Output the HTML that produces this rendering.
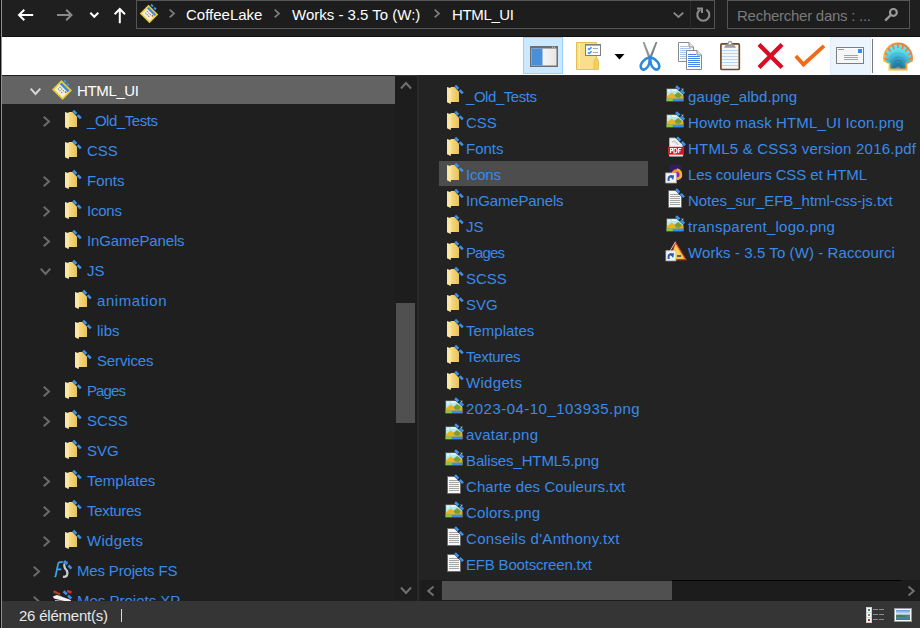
<!DOCTYPE html>
<html><head><meta charset="utf-8"><style>
html,body{margin:0;padding:0;}
body{width:920px;height:628px;position:relative;overflow:hidden;background:#1f1f1f;font-family:"Liberation Sans", sans-serif;}
.t{position:absolute;font-size:15px;line-height:20px;white-space:nowrap;}
svg{display:block}
</style></head><body>
<div style="position:absolute;left:0;top:0;width:920px;height:37px;background:#1f1f1f"></div><div style="position:absolute;left:0;top:36px;width:920px;height:1px;background:#121212"></div><svg style="position:absolute;left:17px;top:8px" width="18" height="14" viewBox="0 0 18 14"><path d="M2 7 H16.2 M7.3 1.7 L2 7 L7.3 12.3" stroke="#fff" stroke-width="2" fill="none"/></svg><svg style="position:absolute;left:56px;top:8px" width="18" height="14" viewBox="0 0 18 14"><path d="M1 7 H15.5 M10.2 1.7 L15.5 7 L10.2 12.3" stroke="#8a8a8a" stroke-width="2" fill="none"/></svg><svg style="position:absolute;left:89px;top:11px" width="12" height="8" viewBox="0 0 12 8"><path d="M1.3 1.8 L5.3 5.8 L9.3 1.8" stroke="#fff" stroke-width="2" fill="none"/></svg><svg style="position:absolute;left:113px;top:7px" width="14" height="17" viewBox="0 0 14 17"><path d="M6.8 16.2 V2 M1.6 7.2 L6.8 2 L12 7.2" stroke="#fff" stroke-width="2" fill="none"/></svg><div style="position:absolute;left:136px;top:0px;width:577px;height:27px;border:1px solid #555;background:#1d1d1d"></div><div style="position:absolute;left:690px;top:1px;width:1px;height:28px;background:#2c2c2c"></div><svg style="position:absolute;left:137px;top:2px" width="24" height="24" viewBox="0 0 24 24"><g transform="translate(12 12) rotate(45) scale(0.88)"><rect x="-7" y="-6.2" width="14" height="12.4" fill="#f3eed8" stroke="#e6cc2a" stroke-width="1.7"/><rect x="-6" y="-5.3" width="12" height="2.6" fill="#3f86de"/><path d="M-4 -0.5 h1.2 M-1.5 -0.5 h1.2 M1 -0.5 h1.2 M-4 2 h1.2 M-1.5 2 h1.2 M1 2 h1.2" stroke="#707070" stroke-width="1.1"/><circle cx="4.3" cy="-1.2" r="0.9" fill="#d8362a"/></g><path d="M14 2.5 L16 4.5 M17 5.5 L19 7.5" stroke="#3d92ea" stroke-width="1.8"/></svg><svg style="position:absolute;left:168px;top:8px" width="8" height="11" viewBox="0 0 8 11"><path d="M1.7 1.7 L6 5.5 L1.7 9.3" stroke="#7a7a7a" stroke-width="1.8" fill="none"/></svg><div class="t" style="left:186px;top:5px;color:#ffffff;">CoffeeLake</div><svg style="position:absolute;left:273px;top:8px" width="8" height="11" viewBox="0 0 8 11"><path d="M1.7 1.7 L6 5.5 L1.7 9.3" stroke="#7a7a7a" stroke-width="1.8" fill="none"/></svg><div class="t" style="left:292px;top:5px;color:#ffffff;">Works - 3.5 To (W:)</div><svg style="position:absolute;left:433px;top:8px" width="8" height="11" viewBox="0 0 8 11"><path d="M1.7 1.7 L6 5.5 L1.7 9.3" stroke="#7a7a7a" stroke-width="1.8" fill="none"/></svg><div class="t" style="left:452px;top:5px;color:#ffffff;letter-spacing:-0.362px;">HTML_UI</div><svg style="position:absolute;left:672px;top:11px" width="13" height="8" viewBox="0 0 13 8"><path d="M1.7 1.7 L6.5 6 L11.3 1.7" stroke="#8a8a8a" stroke-width="1.8" fill="none"/></svg><svg style="position:absolute;left:694px;top:6px" width="18" height="18" viewBox="0 0 18 18"><path d="M6.3 3.6 A6 6 0 1 0 12.3 3.6" stroke="#8a8a8a" stroke-width="2.1" fill="none"/><path d="M3 2.4 H8 V7" stroke="#8a8a8a" stroke-width="2" fill="none"/></svg><div style="position:absolute;left:727px;top:0px;width:181px;height:27px;border:1px solid #555;background:#1d1d1d"></div><div class="t" style="left:737px;top:6px;color:#7a7a7a;letter-spacing:-0.264px;">Rechercher dans : ...</div><svg style="position:absolute;left:882px;top:6px" width="18" height="18" viewBox="0 0 18 18"><circle cx="11.4" cy="6.4" r="3.4" stroke="#9a9a9a" stroke-width="2.2" fill="none"/><path d="M9 8.8 L3.2 14.6" stroke="#9a9a9a" stroke-width="2.3"/></svg><div style="position:absolute;left:2px;top:37px;width:918px;height:38px;background:#ffffff"></div><div style="position:absolute;left:2px;top:75px;width:918px;height:1px;background:#333"></div><div style="position:absolute;left:523px;top:37px;width:38px;height:35px;background:#cce8ff;border:1px solid #99d1ff"></div><svg style="position:absolute;left:530px;top:46px" width="28" height="21" viewBox="0 0 28 21"><defs><linearGradient id="lg" x1="0" x2="1"><stop offset="0" stop-color="#ffffff"/><stop offset="1" stop-color="#e6e6e6"/></linearGradient></defs><rect x="0.75" y="0.75" width="26.5" height="19.5" fill="url(#lg)" stroke="#6e6e6e" stroke-width="1.5"/><rect x="0" y="0" width="28" height="2.5" fill="#6e6e6e"/><rect x="1.5" y="2.5" width="11" height="17" fill="#4a8fd9"/><rect x="22" y="0.7" width="1" height="1" fill="#ddd"/><rect x="24" y="0.7" width="1" height="1" fill="#ddd"/></svg><svg style="position:absolute;left:576px;top:41px" width="26" height="30" viewBox="0 0 26 30"><path d="M0.5 1.5 H20.5 V28.5 H0.5 Z" fill="#f8df8c" stroke="#e4bf52" stroke-width="1"/><path d="M3.5 2 V28" stroke="#fff1c0" stroke-width="1"/><path d="M18 28.5 V19.5 L20.5 16.5 L22.5 19.5 V28.5 Z" fill="#f2cd62" stroke="#e4bf52" stroke-width="0.9"/><rect x="9.5" y="3.5" width="15" height="11" fill="#fafafa" stroke="#7a7f88" stroke-width="1"/><rect x="9" y="3" width="16" height="1.6" fill="#7a7f88"/><path d="M12 7.4 L13.2 8.6 L15.6 6.2 M12 11.4 L13.2 12.6 L15.6 10.2" stroke="#3a8ee8" stroke-width="1.4" fill="none"/><path d="M17 7.5 H22 M17 11.5 H22" stroke="#a8a8a8" stroke-width="1"/></svg><svg style="position:absolute;left:614px;top:54px" width="11" height="6" viewBox="0 0 11 6"><path d="M0.5 0 H10.5 L5.5 5.5 Z" fill="#000"/></svg><svg style="position:absolute;left:636px;top:38px" width="28" height="34" viewBox="0 0 28 34"><path d="M6.6 4 L8.4 4 L14.6 19 L12 19 Z" fill="#8e9399"/><path d="M19.6 4 L21.4 4 L16 19 L13.4 19 Z" fill="#7d8288"/><path d="M13.6 19.2 C8 20.5 3.2 26.5 5.2 30.3 C7.2 33.3 12.2 30.5 13.2 25.5 C13.7 23 13.7 21 13.6 19.2 Z" stroke="#2e8ad8" stroke-width="2.5" fill="none"/><path d="M14.4 19.2 C20 20.5 24.8 26.5 22.8 30.3 C20.8 33.3 15.8 30.5 14.8 25.5 C14.3 23 14.3 21 14.4 19.2 Z" stroke="#2e8ad8" stroke-width="2.5" fill="none"/></svg><svg style="position:absolute;left:678px;top:42px" width="25" height="29" viewBox="0 0 25 29"><path d="M0.5 0.5 H11 L15.5 5 V19.5 H0.5 Z" fill="#fcfcfc" stroke="#8a8a8a" stroke-width="1"/><path d="M11 0.5 V5 H15.5" fill="#e8e8e8" stroke="#8a8a8a" stroke-width="1"/><path d="M2 4.5 H10 M2 6.5 H13 M2 8.5 H13 M2 10.5 H13 M2 12.5 H13 M2 14.5 H13 M2 16.5 H13" stroke="#a8c6f4" stroke-width="1"/><path d="M8.5 8.5 H19 L23.5 13 V27.5 H8.5 Z" fill="#fcfcfc" stroke="#8a8a8a" stroke-width="1"/><path d="M19 8.5 V13 H23.5" fill="#e8e8e8" stroke="#8a8a8a" stroke-width="1"/><path d="M10 12.5 H18 M10 14.5 H22 M10 16.5 H22 M10 18.5 H22 M10 20.5 H22 M10 22.5 H22 M10 24.5 H22" stroke="#4a86e8" stroke-width="1"/></svg><svg style="position:absolute;left:719px;top:40px" width="23" height="31" viewBox="0 0 23 31"><rect x="1.9" y="3.9" width="18.4" height="25.6" rx="1" fill="#f6f6f6" stroke="#6e4a2a" stroke-width="1.7"/><path d="M3 10.5 H19 M3 13.5 H19 M3 16.5 H19 M3 19.5 H19 M3 22.5 H19 M3 25.5 H19" stroke="#b4d6ee" stroke-width="1"/><path d="M5 7.8 L7 4.5 H15 L17 7.8 Z" fill="#9c9c9c"/><circle cx="11" cy="3.3" r="1.8" fill="#fff" stroke="#a0a0a0" stroke-width="1.3"/></svg><svg style="position:absolute;left:757px;top:43px" width="27" height="26" viewBox="0 0 27 26"><path d="M2 1.5 L25 24.5 M25 1.5 L2 24.5" stroke="#d80c24" stroke-width="4.3"/></svg><svg style="position:absolute;left:794px;top:44px" width="32" height="24" viewBox="0 0 32 24"><path d="M1.8 12 L9.5 20.5 L30 1.8" stroke="#f06a1a" stroke-width="3.8" fill="none"/></svg><div style="position:absolute;left:830px;top:37px;width:39px;height:36px;background:#ecf4fd;border:1px solid #e3eefb"></div><svg style="position:absolute;left:836px;top:47px" width="28" height="17" viewBox="0 0 28 17"><rect x="0.5" y="0.5" width="27" height="16" fill="#f5f6f8" stroke="#7e7e7e" stroke-width="1"/><rect x="1" y="1" width="26" height="1" fill="#fff"/><rect x="2" y="2" width="6" height="1" fill="#9a9a9a"/><rect x="22" y="2" width="4" height="4" fill="#3d8be8"/><rect x="8" y="8" width="14" height="1" fill="#a4a4a4"/><rect x="8" y="10" width="14" height="1" fill="#a4a4a4"/><rect x="8" y="12" width="14" height="1" fill="#a4a4a4"/></svg><div style="position:absolute;left:872px;top:39px;width:1px;height:34px;background:#7a7a7a"></div><svg style="position:absolute;left:882px;top:42px" width="32" height="29" viewBox="0 0 32 29"><defs><radialGradient id="sh" cx="16" cy="27" r="24" gradientUnits="userSpaceOnUse"><stop offset="0" stop-color="#5ab4e6"/><stop offset="0.15" stop-color="#2a6f9a"/><stop offset="0.45" stop-color="#36a6c8"/><stop offset="0.75" stop-color="#5adbe6"/><stop offset="1" stop-color="#6ae6ea"/></radialGradient><linearGradient id="sr" x1="0" y1="1" x2="1" y2="0"><stop offset="0" stop-color="#f8cc3a"/><stop offset="0.5" stop-color="#f6a23a"/><stop offset="1" stop-color="#ee6a2e"/></linearGradient></defs><path d="M7.5 27.5 V21.5 L2.2 19 C0.5 9 8 1.5 16 1.5 C24 1.5 31.5 9 29.8 19 L24.5 21.5 V27.5 Z" fill="url(#sh)" stroke="url(#sr)" stroke-width="1.8"/><path d="M12.5 21.5 A3.5 3.5 0 0 1 19.5 21.5" stroke="#2c7aa8" stroke-width="1" fill="none"/><path d="M9.5 21.5 A6.5 6.5 0 0 1 22.5 21.5" stroke="#3a98c0" stroke-width="1" fill="none"/><path d="M6 21 A10 10 0 0 1 26 21" stroke="#48b8d4" stroke-width="1" fill="none"/><path d="M16 1.5 V6 M10.5 2.8 L12 7 M21.5 2.8 L20 7 M6 6 L8.5 9.5 M26 6 L23.5 9.5 M3 11 L6 13 M29 11 L26 13 M2.5 16.5 L5.5 17 M29.5 16.5 L26.5 17" stroke="#f07838" stroke-width="1.5"/></svg><div style="position:absolute;left:2px;top:75px;width:393px;height:526px;background:#1f1f1f"></div><div style="position:absolute;left:2px;top:76px;width:393px;height:28px;background:#636363"></div><div style="position:absolute;left:395px;top:76px;width:22px;height:525px;background:#1d1d1d"></div><div style="position:absolute;left:396px;top:303px;width:19px;height:120px;background:#505050"></div><svg style="position:absolute;left:400px;top:81px" width="12" height="9" viewBox="0 0 12 9"><path d="M1 7.5 L6 2 L11 7.5" stroke="#707070" stroke-width="2" fill="none"/></svg><svg style="position:absolute;left:400px;top:586px" width="12" height="9" viewBox="0 0 12 9"><path d="M1 1.5 L6 7 L11 1.5" stroke="#707070" stroke-width="2" fill="none"/></svg><div style="position:absolute;left:417px;top:75px;width:2px;height:526px;background:#2a2a2a"></div><div style="position:absolute;left:2px;top:75px;width:393px;height:526px;overflow:hidden"><div style="position:absolute;left:-2px;top:-75px;width:920px;height:700px"><svg style="position:absolute;left:29px;top:87px" width="13" height="9" viewBox="0 0 13 9"><path d="M1.7 1.7 L6.5 7 L11.3 1.7" stroke="#d6d6d6" stroke-width="2" fill="none"/></svg><svg style="position:absolute;left:50px;top:78px" width="24" height="24" viewBox="0 0 24 24"><g transform="translate(12 12) rotate(45) scale(0.95)"><rect x="-7" y="-6.2" width="14" height="12.4" fill="#f3eed8" stroke="#e6cc2a" stroke-width="1.7"/><rect x="-6" y="-5.3" width="12" height="2.6" fill="#3f86de"/><path d="M-4 -0.5 h1.2 M-1.5 -0.5 h1.2 M1 -0.5 h1.2 M-4 2 h1.2 M-1.5 2 h1.2 M1 2 h1.2" stroke="#707070" stroke-width="1.1"/><circle cx="4.3" cy="-1.2" r="0.9" fill="#d8362a"/></g><path d="M14 2.5 L16 4.5 M17 5.5 L19 7.5" stroke="#3d92ea" stroke-width="1.8"/></svg><div class="t" style="left:77px;top:81px;color:#ffffff;letter-spacing:-0.362px;">HTML_UI</div><svg style="position:absolute;left:42px;top:115px" width="9" height="13" viewBox="0 0 9 13"><path d="M1.7 1.7 L7 6.5 L1.7 11.3" stroke="#6b6b6b" stroke-width="2" fill="none"/></svg><svg style="position:absolute;left:62px;top:109px" width="24" height="23" viewBox="0 0 24 23"><defs><linearGradient id="f1" x1="0" x2="1"><stop offset="0" stop-color="#f6da86"/><stop offset="0.5" stop-color="#f0cf70"/><stop offset="1" stop-color="#e6c258"/></linearGradient></defs><path d="M6.5 3 H15 V18 H6.5 Z" fill="url(#f1)"/><path d="M3 3 L7 4.2 V18 L6.6 20 L3 18.2 Z" fill="#fae6a2"/><path d="M10.29 0.66 L19.71 10.34" stroke="#1f1f1f" stroke-width="3.1"/><path d="M11.2 1.6 L14.39 4.88 M15.61 6.12 L18.8 9.4" stroke="#3d92ea" stroke-width="2.6"/></svg><div class="t" style="left:87px;top:111px;color:#3a8aea;letter-spacing:-0.450px;">_Old_Tests</div><svg style="position:absolute;left:62px;top:139px" width="24" height="23" viewBox="0 0 24 23"><defs><linearGradient id="f2" x1="0" x2="1"><stop offset="0" stop-color="#f6da86"/><stop offset="0.5" stop-color="#f0cf70"/><stop offset="1" stop-color="#e6c258"/></linearGradient></defs><path d="M6.5 3 H15 V18 H6.5 Z" fill="url(#f2)"/><path d="M3 3 L7 4.2 V18 L6.6 20 L3 18.2 Z" fill="#fae6a2"/><path d="M10.29 0.66 L19.71 10.34" stroke="#1f1f1f" stroke-width="3.1"/><path d="M11.2 1.6 L14.39 4.88 M15.61 6.12 L18.8 9.4" stroke="#3d92ea" stroke-width="2.6"/></svg><div class="t" style="left:87px;top:141px;color:#3a8aea;">CSS</div><svg style="position:absolute;left:42px;top:175px" width="9" height="13" viewBox="0 0 9 13"><path d="M1.7 1.7 L7 6.5 L1.7 11.3" stroke="#6b6b6b" stroke-width="2" fill="none"/></svg><svg style="position:absolute;left:62px;top:169px" width="24" height="23" viewBox="0 0 24 23"><defs><linearGradient id="f3" x1="0" x2="1"><stop offset="0" stop-color="#f6da86"/><stop offset="0.5" stop-color="#f0cf70"/><stop offset="1" stop-color="#e6c258"/></linearGradient></defs><path d="M6.5 3 H15 V18 H6.5 Z" fill="url(#f3)"/><path d="M3 3 L7 4.2 V18 L6.6 20 L3 18.2 Z" fill="#fae6a2"/><path d="M10.29 0.66 L19.71 10.34" stroke="#1f1f1f" stroke-width="3.1"/><path d="M11.2 1.6 L14.39 4.88 M15.61 6.12 L18.8 9.4" stroke="#3d92ea" stroke-width="2.6"/></svg><div class="t" style="left:87px;top:171px;color:#3a8aea;">Fonts</div><svg style="position:absolute;left:42px;top:205px" width="9" height="13" viewBox="0 0 9 13"><path d="M1.7 1.7 L7 6.5 L1.7 11.3" stroke="#6b6b6b" stroke-width="2" fill="none"/></svg><svg style="position:absolute;left:62px;top:199px" width="24" height="23" viewBox="0 0 24 23"><defs><linearGradient id="f4" x1="0" x2="1"><stop offset="0" stop-color="#f6da86"/><stop offset="0.5" stop-color="#f0cf70"/><stop offset="1" stop-color="#e6c258"/></linearGradient></defs><path d="M6.5 3 H15 V18 H6.5 Z" fill="url(#f4)"/><path d="M3 3 L7 4.2 V18 L6.6 20 L3 18.2 Z" fill="#fae6a2"/><path d="M10.29 0.66 L19.71 10.34" stroke="#1f1f1f" stroke-width="3.1"/><path d="M11.2 1.6 L14.39 4.88 M15.61 6.12 L18.8 9.4" stroke="#3d92ea" stroke-width="2.6"/></svg><div class="t" style="left:87px;top:201px;color:#3a8aea;letter-spacing:-0.215px;">Icons</div><svg style="position:absolute;left:42px;top:235px" width="9" height="13" viewBox="0 0 9 13"><path d="M1.7 1.7 L7 6.5 L1.7 11.3" stroke="#6b6b6b" stroke-width="2" fill="none"/></svg><svg style="position:absolute;left:62px;top:229px" width="24" height="23" viewBox="0 0 24 23"><defs><linearGradient id="f5" x1="0" x2="1"><stop offset="0" stop-color="#f6da86"/><stop offset="0.5" stop-color="#f0cf70"/><stop offset="1" stop-color="#e6c258"/></linearGradient></defs><path d="M6.5 3 H15 V18 H6.5 Z" fill="url(#f5)"/><path d="M3 3 L7 4.2 V18 L6.6 20 L3 18.2 Z" fill="#fae6a2"/><path d="M10.29 0.66 L19.71 10.34" stroke="#1f1f1f" stroke-width="3.1"/><path d="M11.2 1.6 L14.39 4.88 M15.61 6.12 L18.8 9.4" stroke="#3d92ea" stroke-width="2.6"/></svg><div class="t" style="left:87px;top:231px;color:#3a8aea;letter-spacing:-0.149px;">InGamePanels</div><svg style="position:absolute;left:39px;top:267px" width="13" height="9" viewBox="0 0 13 9"><path d="M1.7 1.7 L6.5 7 L11.3 1.7" stroke="#6b6b6b" stroke-width="2" fill="none"/></svg><svg style="position:absolute;left:62px;top:259px" width="24" height="23" viewBox="0 0 24 23"><defs><linearGradient id="f6" x1="0" x2="1"><stop offset="0" stop-color="#f6da86"/><stop offset="0.5" stop-color="#f0cf70"/><stop offset="1" stop-color="#e6c258"/></linearGradient></defs><path d="M6.5 3 H15 V18 H6.5 Z" fill="url(#f6)"/><path d="M3 3 L7 4.2 V18 L6.6 20 L3 18.2 Z" fill="#fae6a2"/><path d="M10.29 0.66 L19.71 10.34" stroke="#1f1f1f" stroke-width="3.1"/><path d="M11.2 1.6 L14.39 4.88 M15.61 6.12 L18.8 9.4" stroke="#3d92ea" stroke-width="2.6"/></svg><div class="t" style="left:87px;top:261px;color:#3a8aea;">JS</div><svg style="position:absolute;left:72px;top:289px" width="24" height="23" viewBox="0 0 24 23"><defs><linearGradient id="f7" x1="0" x2="1"><stop offset="0" stop-color="#f6da86"/><stop offset="0.5" stop-color="#f0cf70"/><stop offset="1" stop-color="#e6c258"/></linearGradient></defs><path d="M6.5 3 H15 V18 H6.5 Z" fill="url(#f7)"/><path d="M3 3 L7 4.2 V18 L6.6 20 L3 18.2 Z" fill="#fae6a2"/><path d="M10.29 0.66 L19.71 10.34" stroke="#1f1f1f" stroke-width="3.1"/><path d="M11.2 1.6 L14.39 4.88 M15.61 6.12 L18.8 9.4" stroke="#3d92ea" stroke-width="2.6"/></svg><div class="t" style="left:97px;top:291px;color:#3a8aea;letter-spacing:0.557px;">animation</div><svg style="position:absolute;left:72px;top:319px" width="24" height="23" viewBox="0 0 24 23"><defs><linearGradient id="f8" x1="0" x2="1"><stop offset="0" stop-color="#f6da86"/><stop offset="0.5" stop-color="#f0cf70"/><stop offset="1" stop-color="#e6c258"/></linearGradient></defs><path d="M6.5 3 H15 V18 H6.5 Z" fill="url(#f8)"/><path d="M3 3 L7 4.2 V18 L6.6 20 L3 18.2 Z" fill="#fae6a2"/><path d="M10.29 0.66 L19.71 10.34" stroke="#1f1f1f" stroke-width="3.1"/><path d="M11.2 1.6 L14.39 4.88 M15.61 6.12 L18.8 9.4" stroke="#3d92ea" stroke-width="2.6"/></svg><div class="t" style="left:97px;top:321px;color:#3a8aea;">libs</div><svg style="position:absolute;left:72px;top:349px" width="24" height="23" viewBox="0 0 24 23"><defs><linearGradient id="f9" x1="0" x2="1"><stop offset="0" stop-color="#f6da86"/><stop offset="0.5" stop-color="#f0cf70"/><stop offset="1" stop-color="#e6c258"/></linearGradient></defs><path d="M6.5 3 H15 V18 H6.5 Z" fill="url(#f9)"/><path d="M3 3 L7 4.2 V18 L6.6 20 L3 18.2 Z" fill="#fae6a2"/><path d="M10.29 0.66 L19.71 10.34" stroke="#1f1f1f" stroke-width="3.1"/><path d="M11.2 1.6 L14.39 4.88 M15.61 6.12 L18.8 9.4" stroke="#3d92ea" stroke-width="2.6"/></svg><div class="t" style="left:97px;top:351px;color:#3a8aea;letter-spacing:-0.145px;">Services</div><svg style="position:absolute;left:42px;top:385px" width="9" height="13" viewBox="0 0 9 13"><path d="M1.7 1.7 L7 6.5 L1.7 11.3" stroke="#6b6b6b" stroke-width="2" fill="none"/></svg><svg style="position:absolute;left:62px;top:379px" width="24" height="23" viewBox="0 0 24 23"><defs><linearGradient id="f10" x1="0" x2="1"><stop offset="0" stop-color="#f6da86"/><stop offset="0.5" stop-color="#f0cf70"/><stop offset="1" stop-color="#e6c258"/></linearGradient></defs><path d="M6.5 3 H15 V18 H6.5 Z" fill="url(#f10)"/><path d="M3 3 L7 4.2 V18 L6.6 20 L3 18.2 Z" fill="#fae6a2"/><path d="M10.29 0.66 L19.71 10.34" stroke="#1f1f1f" stroke-width="3.1"/><path d="M11.2 1.6 L14.39 4.88 M15.61 6.12 L18.8 9.4" stroke="#3d92ea" stroke-width="2.6"/></svg><div class="t" style="left:87px;top:381px;color:#3a8aea;letter-spacing:-0.883px;">Pages</div><svg style="position:absolute;left:42px;top:415px" width="9" height="13" viewBox="0 0 9 13"><path d="M1.7 1.7 L7 6.5 L1.7 11.3" stroke="#6b6b6b" stroke-width="2" fill="none"/></svg><svg style="position:absolute;left:62px;top:409px" width="24" height="23" viewBox="0 0 24 23"><defs><linearGradient id="f11" x1="0" x2="1"><stop offset="0" stop-color="#f6da86"/><stop offset="0.5" stop-color="#f0cf70"/><stop offset="1" stop-color="#e6c258"/></linearGradient></defs><path d="M6.5 3 H15 V18 H6.5 Z" fill="url(#f11)"/><path d="M3 3 L7 4.2 V18 L6.6 20 L3 18.2 Z" fill="#fae6a2"/><path d="M10.29 0.66 L19.71 10.34" stroke="#1f1f1f" stroke-width="3.1"/><path d="M11.2 1.6 L14.39 4.88 M15.61 6.12 L18.8 9.4" stroke="#3d92ea" stroke-width="2.6"/></svg><div class="t" style="left:87px;top:411px;color:#3a8aea;">SCSS</div><svg style="position:absolute;left:62px;top:439px" width="24" height="23" viewBox="0 0 24 23"><defs><linearGradient id="f12" x1="0" x2="1"><stop offset="0" stop-color="#f6da86"/><stop offset="0.5" stop-color="#f0cf70"/><stop offset="1" stop-color="#e6c258"/></linearGradient></defs><path d="M6.5 3 H15 V18 H6.5 Z" fill="url(#f12)"/><path d="M3 3 L7 4.2 V18 L6.6 20 L3 18.2 Z" fill="#fae6a2"/><path d="M10.29 0.66 L19.71 10.34" stroke="#1f1f1f" stroke-width="3.1"/><path d="M11.2 1.6 L14.39 4.88 M15.61 6.12 L18.8 9.4" stroke="#3d92ea" stroke-width="2.6"/></svg><div class="t" style="left:87px;top:441px;color:#3a8aea;">SVG</div><svg style="position:absolute;left:42px;top:475px" width="9" height="13" viewBox="0 0 9 13"><path d="M1.7 1.7 L7 6.5 L1.7 11.3" stroke="#6b6b6b" stroke-width="2" fill="none"/></svg><svg style="position:absolute;left:62px;top:469px" width="24" height="23" viewBox="0 0 24 23"><defs><linearGradient id="f13" x1="0" x2="1"><stop offset="0" stop-color="#f6da86"/><stop offset="0.5" stop-color="#f0cf70"/><stop offset="1" stop-color="#e6c258"/></linearGradient></defs><path d="M6.5 3 H15 V18 H6.5 Z" fill="url(#f13)"/><path d="M3 3 L7 4.2 V18 L6.6 20 L3 18.2 Z" fill="#fae6a2"/><path d="M10.29 0.66 L19.71 10.34" stroke="#1f1f1f" stroke-width="3.1"/><path d="M11.2 1.6 L14.39 4.88 M15.61 6.12 L18.8 9.4" stroke="#3d92ea" stroke-width="2.6"/></svg><div class="t" style="left:87px;top:471px;color:#3a8aea;">Templates</div><svg style="position:absolute;left:42px;top:505px" width="9" height="13" viewBox="0 0 9 13"><path d="M1.7 1.7 L7 6.5 L1.7 11.3" stroke="#6b6b6b" stroke-width="2" fill="none"/></svg><svg style="position:absolute;left:62px;top:499px" width="24" height="23" viewBox="0 0 24 23"><defs><linearGradient id="f14" x1="0" x2="1"><stop offset="0" stop-color="#f6da86"/><stop offset="0.5" stop-color="#f0cf70"/><stop offset="1" stop-color="#e6c258"/></linearGradient></defs><path d="M6.5 3 H15 V18 H6.5 Z" fill="url(#f14)"/><path d="M3 3 L7 4.2 V18 L6.6 20 L3 18.2 Z" fill="#fae6a2"/><path d="M10.29 0.66 L19.71 10.34" stroke="#1f1f1f" stroke-width="3.1"/><path d="M11.2 1.6 L14.39 4.88 M15.61 6.12 L18.8 9.4" stroke="#3d92ea" stroke-width="2.6"/></svg><div class="t" style="left:87px;top:501px;color:#3a8aea;letter-spacing:-0.300px;">Textures</div><svg style="position:absolute;left:42px;top:535px" width="9" height="13" viewBox="0 0 9 13"><path d="M1.7 1.7 L7 6.5 L1.7 11.3" stroke="#6b6b6b" stroke-width="2" fill="none"/></svg><svg style="position:absolute;left:62px;top:529px" width="24" height="23" viewBox="0 0 24 23"><defs><linearGradient id="f15" x1="0" x2="1"><stop offset="0" stop-color="#f6da86"/><stop offset="0.5" stop-color="#f0cf70"/><stop offset="1" stop-color="#e6c258"/></linearGradient></defs><path d="M6.5 3 H15 V18 H6.5 Z" fill="url(#f15)"/><path d="M3 3 L7 4.2 V18 L6.6 20 L3 18.2 Z" fill="#fae6a2"/><path d="M10.29 0.66 L19.71 10.34" stroke="#1f1f1f" stroke-width="3.1"/><path d="M11.2 1.6 L14.39 4.88 M15.61 6.12 L18.8 9.4" stroke="#3d92ea" stroke-width="2.6"/></svg><div class="t" style="left:87px;top:531px;color:#3a8aea;letter-spacing:0.302px;">Widgets</div><svg style="position:absolute;left:32px;top:565px" width="9" height="13" viewBox="0 0 9 13"><path d="M1.7 1.7 L7 6.5 L1.7 11.3" stroke="#6b6b6b" stroke-width="2" fill="none"/></svg><svg style="position:absolute;left:50px;top:556px" width="26" height="24" viewBox="0 0 26 24"><path d="M8.3 6.8 L5.6 20 L4.6 21 M8.1 6.9 Q10.5 6 13.6 5.9 M7 13.4 H11.4" stroke="#3aa6ee" stroke-width="1.7" fill="none"/><path d="M17.6 6.6 Q14 6 14.3 10 Q14.6 12.6 16.4 14 Q18.2 16.5 16.9 19.5 Q15.6 21.3 13 20.6" stroke="#c6ced6" stroke-width="2.2" fill="none"/><path d="M13.34 3.86 L22.26 13.54" stroke="#1f1f1f" stroke-width="3.1"/><path d="M14.2 4.8 L17.22 8.08 M18.38 9.32 L21.4 12.6" stroke="#3d92ea" stroke-width="2.6"/></svg><div class="t" style="left:77px;top:561px;color:#3a8aea;letter-spacing:-0.164px;">Mes Projets FS</div><svg style="position:absolute;left:32px;top:595px" width="9" height="13" viewBox="0 0 9 13"><path d="M1.7 1.7 L7 6.5 L1.7 11.3" stroke="#6b6b6b" stroke-width="2" fill="none"/></svg><svg style="position:absolute;left:50px;top:582px" width="26" height="24" viewBox="0 0 26 24"><path d="M3.5 9.2 L10 12.5 M17 9 L21.5 10.5" stroke="#d8302a" stroke-width="2.4"/><path d="M4 10.5 L8 12 L12 15" stroke="#6a5a2a" stroke-width="1"/><path d="M2.8 14.6 L7 13 L21 18 L21 20 L16 19.5 L4 16.6 Z" fill="#f2f2f2"/><path d="M5 18 L20 19.5 V20 H5 Z" fill="#b8b8b8"/><path d="M12.69 8.31 L22.11 17.49" stroke="#1f1f1f" stroke-width="3.1"/><path d="M13.6 9.2 L16.79 12.31 M18.01 13.49 L21.2 16.6" stroke="#3d92ea" stroke-width="2.6"/></svg><div class="t" style="left:77px;top:591px;color:#3a8aea;">Mes Projets XP</div></div></div><div style="position:absolute;left:419px;top:75px;width:501px;height:505px;background:#232323"></div><div style="position:absolute;left:439px;top:161px;width:209px;height:25px;background:#4d4d4d"></div><div style="position:absolute;left:419px;top:75px;width:501px;height:505px;overflow:hidden"><div style="position:absolute;left:-419px;top:-75px;width:920px;height:700px"><svg style="position:absolute;left:444px;top:84px" width="24" height="23" viewBox="0 0 24 23"><defs><linearGradient id="f16" x1="0" x2="1"><stop offset="0" stop-color="#f6da86"/><stop offset="0.5" stop-color="#f0cf70"/><stop offset="1" stop-color="#e6c258"/></linearGradient></defs><path d="M6.5 3 H15 V18 H6.5 Z" fill="url(#f16)"/><path d="M3 3 L7 4.2 V18 L6.6 20 L3 18.2 Z" fill="#fae6a2"/><path d="M10.29 0.66 L19.71 10.34" stroke="#232323" stroke-width="3.1"/><path d="M11.2 1.6 L14.39 4.88 M15.61 6.12 L18.8 9.4" stroke="#3d92ea" stroke-width="2.6"/></svg><div class="t" style="left:466px;top:87px;color:#3a8aea;letter-spacing:-0.450px;">_Old_Tests</div><svg style="position:absolute;left:444px;top:110px" width="24" height="23" viewBox="0 0 24 23"><defs><linearGradient id="f17" x1="0" x2="1"><stop offset="0" stop-color="#f6da86"/><stop offset="0.5" stop-color="#f0cf70"/><stop offset="1" stop-color="#e6c258"/></linearGradient></defs><path d="M6.5 3 H15 V18 H6.5 Z" fill="url(#f17)"/><path d="M3 3 L7 4.2 V18 L6.6 20 L3 18.2 Z" fill="#fae6a2"/><path d="M10.29 0.66 L19.71 10.34" stroke="#232323" stroke-width="3.1"/><path d="M11.2 1.6 L14.39 4.88 M15.61 6.12 L18.8 9.4" stroke="#3d92ea" stroke-width="2.6"/></svg><div class="t" style="left:466px;top:113px;color:#3a8aea;">CSS</div><svg style="position:absolute;left:444px;top:136px" width="24" height="23" viewBox="0 0 24 23"><defs><linearGradient id="f18" x1="0" x2="1"><stop offset="0" stop-color="#f6da86"/><stop offset="0.5" stop-color="#f0cf70"/><stop offset="1" stop-color="#e6c258"/></linearGradient></defs><path d="M6.5 3 H15 V18 H6.5 Z" fill="url(#f18)"/><path d="M3 3 L7 4.2 V18 L6.6 20 L3 18.2 Z" fill="#fae6a2"/><path d="M10.29 0.66 L19.71 10.34" stroke="#232323" stroke-width="3.1"/><path d="M11.2 1.6 L14.39 4.88 M15.61 6.12 L18.8 9.4" stroke="#3d92ea" stroke-width="2.6"/></svg><div class="t" style="left:466px;top:139px;color:#3a8aea;">Fonts</div><svg style="position:absolute;left:444px;top:162px" width="24" height="23" viewBox="0 0 24 23"><defs><linearGradient id="f19" x1="0" x2="1"><stop offset="0" stop-color="#f6da86"/><stop offset="0.5" stop-color="#f0cf70"/><stop offset="1" stop-color="#e6c258"/></linearGradient></defs><path d="M6.5 3 H15 V18 H6.5 Z" fill="url(#f19)"/><path d="M3 3 L7 4.2 V18 L6.6 20 L3 18.2 Z" fill="#fae6a2"/><path d="M10.29 0.66 L19.71 10.34" stroke="#4d4d4d" stroke-width="3.1"/><path d="M11.2 1.6 L14.39 4.88 M15.61 6.12 L18.8 9.4" stroke="#3d92ea" stroke-width="2.6"/></svg><div class="t" style="left:466px;top:165px;color:#3a8aea;letter-spacing:-0.215px;">Icons</div><svg style="position:absolute;left:444px;top:188px" width="24" height="23" viewBox="0 0 24 23"><defs><linearGradient id="f20" x1="0" x2="1"><stop offset="0" stop-color="#f6da86"/><stop offset="0.5" stop-color="#f0cf70"/><stop offset="1" stop-color="#e6c258"/></linearGradient></defs><path d="M6.5 3 H15 V18 H6.5 Z" fill="url(#f20)"/><path d="M3 3 L7 4.2 V18 L6.6 20 L3 18.2 Z" fill="#fae6a2"/><path d="M10.29 0.66 L19.71 10.34" stroke="#232323" stroke-width="3.1"/><path d="M11.2 1.6 L14.39 4.88 M15.61 6.12 L18.8 9.4" stroke="#3d92ea" stroke-width="2.6"/></svg><div class="t" style="left:466px;top:191px;color:#3a8aea;letter-spacing:-0.149px;">InGamePanels</div><svg style="position:absolute;left:444px;top:214px" width="24" height="23" viewBox="0 0 24 23"><defs><linearGradient id="f21" x1="0" x2="1"><stop offset="0" stop-color="#f6da86"/><stop offset="0.5" stop-color="#f0cf70"/><stop offset="1" stop-color="#e6c258"/></linearGradient></defs><path d="M6.5 3 H15 V18 H6.5 Z" fill="url(#f21)"/><path d="M3 3 L7 4.2 V18 L6.6 20 L3 18.2 Z" fill="#fae6a2"/><path d="M10.29 0.66 L19.71 10.34" stroke="#232323" stroke-width="3.1"/><path d="M11.2 1.6 L14.39 4.88 M15.61 6.12 L18.8 9.4" stroke="#3d92ea" stroke-width="2.6"/></svg><div class="t" style="left:466px;top:217px;color:#3a8aea;">JS</div><svg style="position:absolute;left:444px;top:240px" width="24" height="23" viewBox="0 0 24 23"><defs><linearGradient id="f22" x1="0" x2="1"><stop offset="0" stop-color="#f6da86"/><stop offset="0.5" stop-color="#f0cf70"/><stop offset="1" stop-color="#e6c258"/></linearGradient></defs><path d="M6.5 3 H15 V18 H6.5 Z" fill="url(#f22)"/><path d="M3 3 L7 4.2 V18 L6.6 20 L3 18.2 Z" fill="#fae6a2"/><path d="M10.29 0.66 L19.71 10.34" stroke="#232323" stroke-width="3.1"/><path d="M11.2 1.6 L14.39 4.88 M15.61 6.12 L18.8 9.4" stroke="#3d92ea" stroke-width="2.6"/></svg><div class="t" style="left:466px;top:243px;color:#3a8aea;letter-spacing:-0.883px;">Pages</div><svg style="position:absolute;left:444px;top:266px" width="24" height="23" viewBox="0 0 24 23"><defs><linearGradient id="f23" x1="0" x2="1"><stop offset="0" stop-color="#f6da86"/><stop offset="0.5" stop-color="#f0cf70"/><stop offset="1" stop-color="#e6c258"/></linearGradient></defs><path d="M6.5 3 H15 V18 H6.5 Z" fill="url(#f23)"/><path d="M3 3 L7 4.2 V18 L6.6 20 L3 18.2 Z" fill="#fae6a2"/><path d="M10.29 0.66 L19.71 10.34" stroke="#232323" stroke-width="3.1"/><path d="M11.2 1.6 L14.39 4.88 M15.61 6.12 L18.8 9.4" stroke="#3d92ea" stroke-width="2.6"/></svg><div class="t" style="left:466px;top:269px;color:#3a8aea;">SCSS</div><svg style="position:absolute;left:444px;top:292px" width="24" height="23" viewBox="0 0 24 23"><defs><linearGradient id="f24" x1="0" x2="1"><stop offset="0" stop-color="#f6da86"/><stop offset="0.5" stop-color="#f0cf70"/><stop offset="1" stop-color="#e6c258"/></linearGradient></defs><path d="M6.5 3 H15 V18 H6.5 Z" fill="url(#f24)"/><path d="M3 3 L7 4.2 V18 L6.6 20 L3 18.2 Z" fill="#fae6a2"/><path d="M10.29 0.66 L19.71 10.34" stroke="#232323" stroke-width="3.1"/><path d="M11.2 1.6 L14.39 4.88 M15.61 6.12 L18.8 9.4" stroke="#3d92ea" stroke-width="2.6"/></svg><div class="t" style="left:466px;top:295px;color:#3a8aea;">SVG</div><svg style="position:absolute;left:444px;top:318px" width="24" height="23" viewBox="0 0 24 23"><defs><linearGradient id="f25" x1="0" x2="1"><stop offset="0" stop-color="#f6da86"/><stop offset="0.5" stop-color="#f0cf70"/><stop offset="1" stop-color="#e6c258"/></linearGradient></defs><path d="M6.5 3 H15 V18 H6.5 Z" fill="url(#f25)"/><path d="M3 3 L7 4.2 V18 L6.6 20 L3 18.2 Z" fill="#fae6a2"/><path d="M10.29 0.66 L19.71 10.34" stroke="#232323" stroke-width="3.1"/><path d="M11.2 1.6 L14.39 4.88 M15.61 6.12 L18.8 9.4" stroke="#3d92ea" stroke-width="2.6"/></svg><div class="t" style="left:466px;top:321px;color:#3a8aea;">Templates</div><svg style="position:absolute;left:444px;top:344px" width="24" height="23" viewBox="0 0 24 23"><defs><linearGradient id="f26" x1="0" x2="1"><stop offset="0" stop-color="#f6da86"/><stop offset="0.5" stop-color="#f0cf70"/><stop offset="1" stop-color="#e6c258"/></linearGradient></defs><path d="M6.5 3 H15 V18 H6.5 Z" fill="url(#f26)"/><path d="M3 3 L7 4.2 V18 L6.6 20 L3 18.2 Z" fill="#fae6a2"/><path d="M10.29 0.66 L19.71 10.34" stroke="#232323" stroke-width="3.1"/><path d="M11.2 1.6 L14.39 4.88 M15.61 6.12 L18.8 9.4" stroke="#3d92ea" stroke-width="2.6"/></svg><div class="t" style="left:466px;top:347px;color:#3a8aea;letter-spacing:-0.300px;">Textures</div><svg style="position:absolute;left:444px;top:370px" width="24" height="23" viewBox="0 0 24 23"><defs><linearGradient id="f27" x1="0" x2="1"><stop offset="0" stop-color="#f6da86"/><stop offset="0.5" stop-color="#f0cf70"/><stop offset="1" stop-color="#e6c258"/></linearGradient></defs><path d="M6.5 3 H15 V18 H6.5 Z" fill="url(#f27)"/><path d="M3 3 L7 4.2 V18 L6.6 20 L3 18.2 Z" fill="#fae6a2"/><path d="M10.29 0.66 L19.71 10.34" stroke="#232323" stroke-width="3.1"/><path d="M11.2 1.6 L14.39 4.88 M15.61 6.12 L18.8 9.4" stroke="#3d92ea" stroke-width="2.6"/></svg><div class="t" style="left:466px;top:373px;color:#3a8aea;letter-spacing:0.302px;">Widgets</div><svg style="position:absolute;left:444px;top:396px" width="24" height="23" viewBox="0 0 24 23"><rect x="1.5" y="4.5" width="17" height="12.7" fill="#b4e8f2" stroke="#4a3e28" stroke-width="0.7"/><path d="M3 6.8 h2.2 M7 6.2 h4.5" stroke="#f6fcff" stroke-width="1.2"/><path d="M1.8 12.6 L6.8 8.6 L10.6 11.6 L13 8.4 L18.2 11.6 V17 H1.8 Z" fill="#e8b41e"/><path d="M9.4 11 L13 8.1 L17 11 L14.5 14 L11 13.5 Z" fill="#7c9c34"/><path d="M14.5 14 L18.2 12 V15 H13 Z" fill="#d6a820"/><rect x="1.8" y="14.6" width="16.4" height="2.5" fill="#3b8ee6"/><rect x="1.8" y="14.6" width="6" height="2.5" fill="#84cc3c"/><path d="M10.02 1.34 L20.18 10.26" stroke="#232323" stroke-width="3.1"/><path d="M11.0 2.2 L14.44 5.22 M15.76 6.38 L19.2 9.4" stroke="#3d92ea" stroke-width="2.6"/></svg><div class="t" style="left:466px;top:399px;color:#3a8aea;letter-spacing:0.467px;">2023-04-10_103935.png</div><svg style="position:absolute;left:444px;top:422px" width="24" height="23" viewBox="0 0 24 23"><rect x="1.5" y="4.5" width="17" height="12.7" fill="#b4e8f2" stroke="#4a3e28" stroke-width="0.7"/><path d="M3 6.8 h2.2 M7 6.2 h4.5" stroke="#f6fcff" stroke-width="1.2"/><path d="M1.8 12.6 L6.8 8.6 L10.6 11.6 L13 8.4 L18.2 11.6 V17 H1.8 Z" fill="#e8b41e"/><path d="M9.4 11 L13 8.1 L17 11 L14.5 14 L11 13.5 Z" fill="#7c9c34"/><path d="M14.5 14 L18.2 12 V15 H13 Z" fill="#d6a820"/><rect x="1.8" y="14.6" width="16.4" height="2.5" fill="#3b8ee6"/><rect x="1.8" y="14.6" width="6" height="2.5" fill="#84cc3c"/><path d="M10.02 1.34 L20.18 10.26" stroke="#232323" stroke-width="3.1"/><path d="M11.0 2.2 L14.44 5.22 M15.76 6.38 L19.2 9.4" stroke="#3d92ea" stroke-width="2.6"/></svg><div class="t" style="left:466px;top:425px;color:#3a8aea;letter-spacing:0.214px;">avatar.png</div><svg style="position:absolute;left:444px;top:448px" width="24" height="23" viewBox="0 0 24 23"><rect x="1.5" y="4.5" width="17" height="12.7" fill="#b4e8f2" stroke="#4a3e28" stroke-width="0.7"/><path d="M3 6.8 h2.2 M7 6.2 h4.5" stroke="#f6fcff" stroke-width="1.2"/><path d="M1.8 12.6 L6.8 8.6 L10.6 11.6 L13 8.4 L18.2 11.6 V17 H1.8 Z" fill="#e8b41e"/><path d="M9.4 11 L13 8.1 L17 11 L14.5 14 L11 13.5 Z" fill="#7c9c34"/><path d="M14.5 14 L18.2 12 V15 H13 Z" fill="#d6a820"/><rect x="1.8" y="14.6" width="16.4" height="2.5" fill="#3b8ee6"/><rect x="1.8" y="14.6" width="6" height="2.5" fill="#84cc3c"/><path d="M10.02 1.34 L20.18 10.26" stroke="#232323" stroke-width="3.1"/><path d="M11.0 2.2 L14.44 5.22 M15.76 6.38 L19.2 9.4" stroke="#3d92ea" stroke-width="2.6"/></svg><div class="t" style="left:466px;top:451px;color:#3a8aea;letter-spacing:-0.129px;">Balises_HTML5.png</div><svg style="position:absolute;left:444px;top:474px" width="24" height="23" viewBox="0 0 24 23"><path d="M3.5 2.5 H13 L16.5 6 V19.5 H3.5 Z" fill="#f8f8f8" stroke="#6a6a6a" stroke-width="0.9"/><rect x="5" y="6" width="10" height="1" fill="#a4a4a4"/><rect x="5" y="8" width="10" height="1" fill="#a4a4a4"/><rect x="5" y="10" width="10" height="1" fill="#a4a4a4"/><rect x="5" y="12" width="10" height="1" fill="#a4a4a4"/><rect x="5" y="14" width="10" height="1" fill="#a4a4a4"/><rect x="5" y="16" width="10" height="1" fill="#a4a4a4"/><path d="M10.04 0.24 L19.96 10.16" stroke="#232323" stroke-width="3.1"/><path d="M11 1.2 L14.36 4.56 M15.64 5.84 L19 9.2" stroke="#3d92ea" stroke-width="2.6"/></svg><div class="t" style="left:466px;top:477px;color:#3a8aea;letter-spacing:0.077px;">Charte des Couleurs.txt</div><svg style="position:absolute;left:444px;top:500px" width="24" height="23" viewBox="0 0 24 23"><rect x="1.5" y="4.5" width="17" height="12.7" fill="#b4e8f2" stroke="#4a3e28" stroke-width="0.7"/><path d="M3 6.8 h2.2 M7 6.2 h4.5" stroke="#f6fcff" stroke-width="1.2"/><path d="M1.8 12.6 L6.8 8.6 L10.6 11.6 L13 8.4 L18.2 11.6 V17 H1.8 Z" fill="#e8b41e"/><path d="M9.4 11 L13 8.1 L17 11 L14.5 14 L11 13.5 Z" fill="#7c9c34"/><path d="M14.5 14 L18.2 12 V15 H13 Z" fill="#d6a820"/><rect x="1.8" y="14.6" width="16.4" height="2.5" fill="#3b8ee6"/><rect x="1.8" y="14.6" width="6" height="2.5" fill="#84cc3c"/><path d="M10.02 1.34 L20.18 10.26" stroke="#232323" stroke-width="3.1"/><path d="M11.0 2.2 L14.44 5.22 M15.76 6.38 L19.2 9.4" stroke="#3d92ea" stroke-width="2.6"/></svg><div class="t" style="left:466px;top:503px;color:#3a8aea;letter-spacing:0.161px;">Colors.png</div><svg style="position:absolute;left:444px;top:526px" width="24" height="23" viewBox="0 0 24 23"><path d="M3.5 2.5 H13 L16.5 6 V19.5 H3.5 Z" fill="#f8f8f8" stroke="#6a6a6a" stroke-width="0.9"/><rect x="5" y="6" width="10" height="1" fill="#a4a4a4"/><rect x="5" y="8" width="10" height="1" fill="#a4a4a4"/><rect x="5" y="10" width="10" height="1" fill="#a4a4a4"/><rect x="5" y="12" width="10" height="1" fill="#a4a4a4"/><rect x="5" y="14" width="10" height="1" fill="#a4a4a4"/><rect x="5" y="16" width="10" height="1" fill="#a4a4a4"/><path d="M10.04 0.24 L19.96 10.16" stroke="#232323" stroke-width="3.1"/><path d="M11 1.2 L14.36 4.56 M15.64 5.84 L19 9.2" stroke="#3d92ea" stroke-width="2.6"/></svg><div class="t" style="left:466px;top:529px;color:#3a8aea;letter-spacing:0.312px;">Conseils d&#39;Anthony.txt</div><svg style="position:absolute;left:444px;top:552px" width="24" height="23" viewBox="0 0 24 23"><path d="M3.5 2.5 H13 L16.5 6 V19.5 H3.5 Z" fill="#f8f8f8" stroke="#6a6a6a" stroke-width="0.9"/><rect x="5" y="6" width="10" height="1" fill="#a4a4a4"/><rect x="5" y="8" width="10" height="1" fill="#a4a4a4"/><rect x="5" y="10" width="10" height="1" fill="#a4a4a4"/><rect x="5" y="12" width="10" height="1" fill="#a4a4a4"/><rect x="5" y="14" width="10" height="1" fill="#a4a4a4"/><rect x="5" y="16" width="10" height="1" fill="#a4a4a4"/><path d="M10.04 0.24 L19.96 10.16" stroke="#232323" stroke-width="3.1"/><path d="M11 1.2 L14.36 4.56 M15.64 5.84 L19 9.2" stroke="#3d92ea" stroke-width="2.6"/></svg><div class="t" style="left:466px;top:555px;color:#3a8aea;letter-spacing:-0.190px;">EFB Bootscreen.txt</div><svg style="position:absolute;left:665px;top:84px" width="24" height="23" viewBox="0 0 24 23"><rect x="1.5" y="4.5" width="17" height="12.7" fill="#b4e8f2" stroke="#4a3e28" stroke-width="0.7"/><path d="M3 6.8 h2.2 M7 6.2 h4.5" stroke="#f6fcff" stroke-width="1.2"/><path d="M1.8 12.6 L6.8 8.6 L10.6 11.6 L13 8.4 L18.2 11.6 V17 H1.8 Z" fill="#e8b41e"/><path d="M9.4 11 L13 8.1 L17 11 L14.5 14 L11 13.5 Z" fill="#7c9c34"/><path d="M14.5 14 L18.2 12 V15 H13 Z" fill="#d6a820"/><rect x="1.8" y="14.6" width="16.4" height="2.5" fill="#3b8ee6"/><rect x="1.8" y="14.6" width="6" height="2.5" fill="#84cc3c"/><path d="M10.02 1.34 L20.18 10.26" stroke="#232323" stroke-width="3.1"/><path d="M11.0 2.2 L14.44 5.22 M15.76 6.38 L19.2 9.4" stroke="#3d92ea" stroke-width="2.6"/></svg><div class="t" style="left:688px;top:87px;color:#3a8aea;letter-spacing:0.106px;">gauge_albd.png</div><svg style="position:absolute;left:665px;top:110px" width="24" height="23" viewBox="0 0 24 23"><rect x="1.5" y="4.5" width="17" height="12.7" fill="#b4e8f2" stroke="#4a3e28" stroke-width="0.7"/><path d="M3 6.8 h2.2 M7 6.2 h4.5" stroke="#f6fcff" stroke-width="1.2"/><path d="M1.8 12.6 L6.8 8.6 L10.6 11.6 L13 8.4 L18.2 11.6 V17 H1.8 Z" fill="#e8b41e"/><path d="M9.4 11 L13 8.1 L17 11 L14.5 14 L11 13.5 Z" fill="#7c9c34"/><path d="M14.5 14 L18.2 12 V15 H13 Z" fill="#d6a820"/><rect x="1.8" y="14.6" width="16.4" height="2.5" fill="#3b8ee6"/><rect x="1.8" y="14.6" width="6" height="2.5" fill="#84cc3c"/><path d="M10.02 1.34 L20.18 10.26" stroke="#232323" stroke-width="3.1"/><path d="M11.0 2.2 L14.44 5.22 M15.76 6.38 L19.2 9.4" stroke="#3d92ea" stroke-width="2.6"/></svg><div class="t" style="left:688px;top:113px;color:#3a8aea;letter-spacing:0.130px;">Howto mask HTML_UI Icon.png</div><svg style="position:absolute;left:665px;top:136px" width="24" height="23" viewBox="0 0 24 23"><path d="M4.5 2 H14 L17.8 5.8 V20 H4.5 Z" fill="#f2f2f2" stroke="#bdbdbd" stroke-width="0.8"/><path d="M7 6 Q9 4.5 11 6.5 T13 9" stroke="#c8c8c8" stroke-width="1.5" fill="none"/><rect x="3" y="10.8" width="16" height="8" fill="#e0141e"/><path d="M5.5 17 V12.5 H7.5 V14.6 H5.8 M9 17 V12.5 H10.5 Q12 12.5 12 14.75 Q12 17 10.5 17 Z M13.6 17 V12.5 H16.2 M13.6 14.7 H15.6" stroke="#fff" stroke-width="1.1" fill="none"/><rect x="4.5" y="18.8" width="13.3" height="1.5" fill="#ececec"/><path d="M11.04 0.46 L20.96 10.14" stroke="#232323" stroke-width="3.1"/><path d="M12 1.4 L15.36 4.68 M16.64 5.92 L20 9.2" stroke="#3d92ea" stroke-width="2.6"/></svg><div class="t" style="left:688px;top:139px;color:#3a8aea;letter-spacing:0.222px;">HTML5 &amp; CSS3 version 2016.pdf</div><svg style="position:absolute;left:665px;top:162px" width="24" height="23" viewBox="0 0 24 23"><path d="M5 2.7 H14.5 L17 5.2 V18.8 H5 Z" fill="#2e1d62"/><circle cx="11.5" cy="12.2" r="5" fill="#ff8a1e"/><path d="M12 7 Q17 9 16.4 13.8 Q15.5 17 12 17.2" stroke="#ffc02a" stroke-width="1.6" fill="none"/><circle cx="11.8" cy="12.6" r="2.6" fill="#7a2cc8"/><rect x="0.8" y="11" width="10.4" height="9.9" fill="#f4f4f4" stroke="#c8c8c8" stroke-width="0.8"/><path d="M3.6 19 V16.5 Q3.6 14.6 6 14.6 H7" stroke="#2a5cb0" stroke-width="2" fill="none"/><path d="M6 12 L9.8 15 L6 18 Z" fill="#2a5cb0" transform="rotate(-40 7 15)"/></svg><div class="t" style="left:688px;top:165px;color:#3a8aea;letter-spacing:-0.120px;">Les couleurs CSS et HTML</div><svg style="position:absolute;left:665px;top:188px" width="24" height="23" viewBox="0 0 24 23"><path d="M3.5 2.5 H13 L16.5 6 V19.5 H3.5 Z" fill="#f8f8f8" stroke="#6a6a6a" stroke-width="0.9"/><rect x="5" y="6" width="10" height="1" fill="#a4a4a4"/><rect x="5" y="8" width="10" height="1" fill="#a4a4a4"/><rect x="5" y="10" width="10" height="1" fill="#a4a4a4"/><rect x="5" y="12" width="10" height="1" fill="#a4a4a4"/><rect x="5" y="14" width="10" height="1" fill="#a4a4a4"/><rect x="5" y="16" width="10" height="1" fill="#a4a4a4"/><path d="M10.04 0.24 L19.96 10.16" stroke="#232323" stroke-width="3.1"/><path d="M11 1.2 L14.36 4.56 M15.64 5.84 L19 9.2" stroke="#3d92ea" stroke-width="2.6"/></svg><div class="t" style="left:688px;top:191px;color:#3a8aea;letter-spacing:-0.043px;">Notes_sur_EFB_html-css-js.txt</div><svg style="position:absolute;left:665px;top:214px" width="24" height="23" viewBox="0 0 24 23"><rect x="1.5" y="4.5" width="17" height="12.7" fill="#b4e8f2" stroke="#4a3e28" stroke-width="0.7"/><path d="M3 6.8 h2.2 M7 6.2 h4.5" stroke="#f6fcff" stroke-width="1.2"/><path d="M1.8 12.6 L6.8 8.6 L10.6 11.6 L13 8.4 L18.2 11.6 V17 H1.8 Z" fill="#e8b41e"/><path d="M9.4 11 L13 8.1 L17 11 L14.5 14 L11 13.5 Z" fill="#7c9c34"/><path d="M14.5 14 L18.2 12 V15 H13 Z" fill="#d6a820"/><rect x="1.8" y="14.6" width="16.4" height="2.5" fill="#3b8ee6"/><rect x="1.8" y="14.6" width="6" height="2.5" fill="#84cc3c"/><path d="M10.02 1.34 L20.18 10.26" stroke="#232323" stroke-width="3.1"/><path d="M11.0 2.2 L14.44 5.22 M15.76 6.38 L19.2 9.4" stroke="#3d92ea" stroke-width="2.6"/></svg><div class="t" style="left:688px;top:217px;color:#3a8aea;letter-spacing:0.273px;">transparent_logo.png</div><svg style="position:absolute;left:665px;top:240px" width="24" height="23" viewBox="0 0 24 23"><path d="M10.3 2 L21 19.6 H5 Z" fill="#f2c438" stroke="#c8342a" stroke-width="1.2"/><path d="M10.3 5 L17.5 17.5 H8 Z" fill="#f7d45a"/><path d="M10.3 2 L5 11" stroke="#f6b8b0" stroke-width="1"/><path d="M12 16 h4" stroke="#3a3a3a" stroke-width="1.5"/><rect x="1" y="10.8" width="9.8" height="10" fill="#f4f4f4" stroke="#c8c8c8" stroke-width="0.8"/><path d="M3.6 19 V16.5 Q3.6 14.6 6 14.6 H7" stroke="#2a5cb0" stroke-width="2" fill="none"/><path d="M6 12 L9.8 15 L6 18 Z" fill="#2a5cb0" transform="rotate(-40 7 15)"/></svg><div class="t" style="left:688px;top:243px;color:#3a8aea;letter-spacing:0.085px;">Works - 3.5 To (W) - Raccourci</div></div></div><div style="position:absolute;left:421px;top:580px;width:499px;height:21px;background:#1c1c1c"></div><div style="position:absolute;left:442px;top:581px;width:230px;height:19px;background:#505050"></div><div style="position:absolute;left:672px;top:580px;width:229px;height:1px;background:#000"></div><svg style="position:absolute;left:426px;top:585px" width="9" height="12" viewBox="0 0 9 12"><path d="M7.5 1.6 L2.3 6 L7.5 10.4" stroke="#707070" stroke-width="2" fill="none"/></svg><svg style="position:absolute;left:907px;top:585px" width="9" height="12" viewBox="0 0 9 12"><path d="M1.5 1.6 L6.7 6 L1.5 10.4" stroke="#707070" stroke-width="2" fill="none"/></svg><div style="position:absolute;left:2px;top:601px;width:918px;height:27px;background:#353535"></div><div class="t" style="left:19px;top:606px;color:#e8e8e8;letter-spacing:-0.228px;">26 élément(s)</div><div style="position:absolute;left:121px;top:609px;width:1px;height:13px;background:#d8d8d8"></div><svg style="position:absolute;left:866px;top:607px" width="19" height="16" viewBox="0 0 19 16"><rect x="0" y="0" width="6" height="16" fill="#cfcfcf"/><rect x="1" y="1" width="4" height="4" fill="#fff"/><rect x="1" y="6" width="4" height="4" fill="#fff"/><rect x="1" y="11" width="4" height="4" fill="#fff"/><rect x="2" y="2" width="2" height="2" fill="#3a7a9a"/><rect x="2" y="7" width="2" height="2" fill="#6a9a40"/><rect x="2" y="12" width="2" height="2" fill="#b82a1a"/><path d="M7 2.5 H12 M13 2.5 H18 M7 7.5 H12 M13 7.5 H18 M7 12.5 H12 M13 12.5 H18" stroke="#8c8c8c" stroke-width="1.2"/></svg><svg style="position:absolute;left:894px;top:608px" width="18" height="14" viewBox="0 0 18 14"><defs><linearGradient id="ls" x1="0" y1="0" x2="0" y2="1"><stop offset="0" stop-color="#5a96e0"/><stop offset="0.4" stop-color="#d8e8f4"/><stop offset="0.55" stop-color="#4a8a5a"/><stop offset="0.75" stop-color="#5a8ab8"/><stop offset="1" stop-color="#3a68b0"/></linearGradient></defs><rect x="0.5" y="0.5" width="17" height="13" fill="#fafafa" stroke="#9a9a9a" stroke-width="1"/><rect x="2" y="2" width="14" height="10" fill="url(#ls)"/><path d="M2 8 Q6 6 9 7.5 T16 9 V9.5 H2 Z" fill="#3a7a48" opacity="0.8"/></svg><div style="position:absolute;left:0;top:0;width:1px;height:628px;background:#0e0b08"></div><div style="position:absolute;left:1px;top:0;width:1px;height:628px;background:#3fb89c"></div>
</body></html>
